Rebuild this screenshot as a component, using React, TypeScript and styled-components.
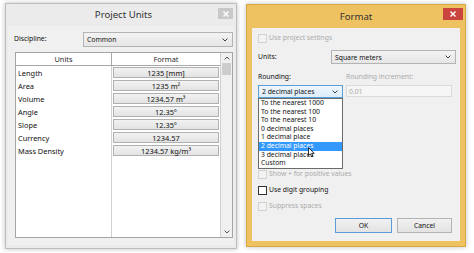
import React from 'react';
import styled, { createGlobalStyle } from 'styled-components';

const GlobalStyle = createGlobalStyle`
  html, body { margin: 0; padding: 0; background: #ffffff; }
  body { font-family: "Noto Sans", "Segoe UI", sans-serif; color: #111; }
  * { box-sizing: border-box; }
`;

const Desktop = styled.div`
  width: 474px;
  height: 253px;
  overflow: hidden;
  display: flex;
  align-items: flex-start;
  gap: 9px;
  padding: 3px 0 0 5px;
`;

const Window = styled.div<{ $active?: boolean; $width: number; $height: number }>`
  width: ${(p) => p.$width}px;
  height: ${(p) => p.$height}px;
  margin-top: ${(p) => (p.$active ? 1 : 0)}px;
  flex: none;
  display: flex;
  flex-direction: column;
  background: ${(p) => (p.$active ? '#efc261' : '#ebebeb')};
  border: 1px solid ${(p) => (p.$active ? '#d9a844' : '#bdbdbd')};
  box-shadow: 0 0 5px rgba(0, 0, 0, 0.25);
`;

const TitleBar = styled.div<{ $height: number }>`
  height: ${(p) => p.$height}px;
  flex: none;
  display: grid;
  grid-template-columns: 1fr auto 1fr;
  align-items: start;
`;

const Title = styled.div<{ $shift?: number }>`
  grid-column: 2;
  align-self: center;
  padding-left: ${(p) => p.$shift ?? 0}px;
  font-size: 9.6px;
  line-height: 1;
  color: #333;
  white-space: nowrap;
`;

const CloseButton = styled.div<{ $active?: boolean }>`
  grid-column: 3;
  justify-self: end;
  width: ${(p) => (p.$active ? 20 : 15)}px;
  height: ${(p) => (p.$active ? 12 : 11)}px;
  margin: ${(p) => (p.$active ? '3px 2px 0 0' : '4px 3px 0 0')};
  background: ${(p) => (p.$active ? '#c9453d' : '#c9c9c9')};
  display: flex;
  align-items: center;
  justify-content: center;
`;

const Client = styled.div<{ $active?: boolean }>`
  flex: 1;
  display: flex;
  flex-direction: column;
  background: #f0f0f0;
  margin: ${(p) => (p.$active ? '0 5px 5px' : '0 2px 3px')};
  padding: ${(p) => (p.$active ? '5px 4px 0 6px' : '6px 1px 0 6px')};
`;

const Label = styled.span<{ $disabled?: boolean }>`
  font-size: 6.8px;
  line-height: 1;
  color: ${(p) => (p.$disabled ? '#ababab' : '#111')};
  white-space: nowrap;
`;

const FieldRow = styled.div<{ $labelWidth: number; $height: number; $mt?: number }>`
  display: grid;
  grid-template-columns: ${(p) => p.$labelWidth}px auto;
  align-items: center;
  height: ${(p) => p.$height}px;
  margin-top: ${(p) => p.$mt ?? 0}px;
  flex: none;
`;

const ComboBox = styled.div<{ $focused?: boolean; $width: number; $height: number }>`
  width: ${(p) => p.$width}px;
  height: ${(p) => p.$height}px;
  display: flex;
  align-items: center;
  justify-content: space-between;
  padding: 0 4px 0 3px;
  border: 1px solid ${(p) => (p.$focused ? '#5b9fd8' : '#b3b3b3')};
  background: ${(p) =>
    p.$focused
      ? 'linear-gradient(#eef6fd, #dcedfb)'
      : 'linear-gradient(#f3f3f3, #e6e6e6)'};
  font-size: 6.8px;
  color: #111;
  white-space: nowrap;
`;

const Chevron = () => (
  <svg width="6" height="4" viewBox="0 0 6 4">
    <path d="M0.6 0.6 L3 3 L5.4 0.6" fill="none" stroke="#404040" strokeWidth="1" />
  </svg>
);

const CrossIcon = () => (
  <svg width="6" height="6" viewBox="0 0 6 6">
    <path d="M0.5 0.5 L5.5 5.5 M5.5 0.5 L0.5 5.5" stroke="#ffffff" strokeWidth="1.4" />
  </svg>
);

/* ---------- list view (left window) ---------- */

const ListView = styled.div`
  flex: none;
  height: 186px;
  margin-top: 5px;
  margin-left: 1px;
  display: flex;
  border: 1px solid #a5a5a5;
  background: #ffffff;
`;

const Grid = styled.div`
  flex: 1;
  display: grid;
  grid-template-columns: 96px 108px;
  grid-template-rows: repeat(8, 13px) 1fr;
  border-right: 1px solid #d0d0d0;
`;

const HeaderCell = styled.div<{ $first?: boolean }>`
  display: flex;
  align-items: center;
  justify-content: center;
  font-size: 7.4px;
  color: #2a2a2a;
  border-bottom: 1px solid #a8a8a8;
  border-right: ${(p) => (p.$first ? '1px solid #a8a8a8' : 'none')};
`;

const NameCell = styled.div`
  display: flex;
  align-items: center;
  padding-left: 2px;
  font-size: 7.4px;
  color: #111;
  border-right: 1px solid #cfcfcf;
  white-space: nowrap;
`;

const ValueCell = styled.div`
  display: flex;
  padding: 1px;
`;

const FormatButton = styled.div`
  flex: 1;
  display: flex;
  align-items: center;
  justify-content: center;
  border: 1px solid #b1b1b1;
  background: linear-gradient(#f2f2f2, #e3e3e3);
  font-size: 7.4px;
  color: #111;
  white-space: nowrap;
`;

const FillerCell = styled.div<{ $first?: boolean }>`
  border-right: ${(p) => (p.$first ? '1px solid #cfcfcf' : 'none')};
`;

const ScrollBar = styled.div`
  width: 11px;
  flex: none;
  display: flex;
  flex-direction: column;
  background: #f0f0f0;
`;

const ScrollArrow = styled.div`
  height: 10px;
  flex: none;
  display: flex;
  align-items: center;
  justify-content: center;
`;

const ScrollThumb = styled.div`
  height: 12px;
  margin: 0 1px;
  flex: none;
  background: #cdcdcd;
`;

const ScrollTrack = styled.div`
  flex: 1;
`;

const ArrowIcon = ({ up }: { up?: boolean }) => (
  <svg width="6" height="4" viewBox="0 0 6 4">
    <path
      d={up ? 'M0.6 3.4 L3 1 L5.4 3.4' : 'M0.6 0.6 L3 3 L5.4 0.6'}
      fill="none"
      stroke="#505050"
      strokeWidth="1"
    />
  </svg>
);

/* ---------- right window ---------- */

const CheckRow = styled.div<{ $mt?: number }>`
  display: flex;
  align-items: center;
  gap: 2px;
  height: 10px;
  flex: none;
  margin-top: ${(p) => p.$mt ?? 0}px;
`;

const CheckBox = styled.span<{ $disabled?: boolean }>`
  width: 9px;
  height: 9px;
  flex: none;
  border: 1px solid ${(p) => (p.$disabled ? '#d2d2d2' : '#333333')};
  background: ${(p) => (p.$disabled ? '#f2f2f2' : '#ffffff')};
`;

const ControlsRow = styled.div`
  display: flex;
  align-items: flex-start;
  gap: 3px;
  height: 13px;
  margin-top: 3px;
  flex: none;
`;

const ComboWrap = styled.div`
  position: relative;
`;

const TextField = styled.div`
  width: 106px;
  height: 12px;
  display: flex;
  align-items: center;
  padding-left: 2px;
  border: 1px solid #dadada;
  background: #f6f6f6;
  font-size: 6.8px;
  color: #a9a9a9;
`;

const DropList = styled.div`
  position: absolute;
  top: 100%;
  left: 0;
  width: 85px;
  border: 1px solid #6b6b6b;
  background: #ffffff;
  z-index: 2;
`;

const DropItem = styled.div<{ $selected?: boolean }>`
  height: 8.6px;
  line-height: 8.6px;
  padding-left: 2px;
  font-size: 6.8px;
  white-space: nowrap;
  color: ${(p) => (p.$selected ? '#ffffff' : '#111')};
  background: ${(p) => (p.$selected ? '#3399ff' : 'transparent')};
`;

const Pointer = styled.svg`
  position: absolute;
  left: 49px;
  top: 48px;
`;

const ButtonRow = styled.div`
  display: flex;
  justify-content: flex-end;
  gap: 5px;
  margin-top: 7px;
  padding-right: 4px;
  flex: none;
`;

const DialogButton = styled.div<{ $default?: boolean; $width: number }>`
  width: ${(p) => p.$width}px;
  height: 15px;
  display: flex;
  align-items: center;
  justify-content: center;
  border: 1px solid ${(p) => (p.$default ? '#5d9bd6' : '#b3b3b3')};
  background: linear-gradient(#f1f1f1, #e3e3e3);
  font-size: 6.8px;
  color: #111;
`;

const rows: { name: string; value: string }[] = [
  { name: 'Length', value: '1235 [mm]' },
  { name: 'Area', value: '1235 m²' },
  { name: 'Volume', value: '1234.57 m³' },
  { name: 'Angle', value: '12.35°' },
  { name: 'Slope', value: '12.35°' },
  { name: 'Currency', value: '1234.57' },
  { name: 'Mass Density', value: '1234.57 kg/m³' },
];

const roundingOptions = [
  'To the nearest 1000',
  'To the nearest 100',
  'To the nearest 10',
  '0 decimal places',
  '1 decimal place',
  '2 decimal places',
  '3 decimal places',
  'Custom',
];

export default function App() {
  return (
    <>
      <GlobalStyle />
      <Desktop>
        <Window $width={232} $height={246}>
          <TitleBar $height={22}>
            <Title $shift={5}>Project Units</Title>
            <CloseButton>
              <CrossIcon />
            </CloseButton>
          </TitleBar>
          <Client>
            <FieldRow $labelWidth={69} $height={15}>
              <Label>Discipline:</Label>
              <ComboBox $width={150} $height={15}>
                <span>Common</span>
                <Chevron />
              </ComboBox>
            </FieldRow>
            <ListView>
              <Grid>
                <HeaderCell $first>Units</HeaderCell>
                <HeaderCell>Format</HeaderCell>
                {rows.map((r) => (
                  <React.Fragment key={r.name}>
                    <NameCell>{r.name}</NameCell>
                    <ValueCell>
                      <FormatButton>{r.value}</FormatButton>
                    </ValueCell>
                  </React.Fragment>
                ))}
                <FillerCell $first />
                <FillerCell />
              </Grid>
              <ScrollBar>
                <ScrollArrow>
                  <ArrowIcon up />
                </ScrollArrow>
                <ScrollThumb />
                <ScrollTrack />
                <ScrollArrow>
                  <ArrowIcon />
                </ScrollArrow>
              </ScrollBar>
            </ListView>
          </Client>
        </Window>

        <Window $active $width={220} $height={243}>
          <TitleBar $height={23}>
            <Title>Format</Title>
            <CloseButton $active>
              <CrossIcon />
            </CloseButton>
          </TitleBar>
          <Client $active>
            <CheckRow>
              <CheckBox $disabled />
              <Label $disabled>Use project settings</Label>
            </CheckRow>
            <FieldRow $labelWidth={73} $height={14} $mt={7}>
              <Label>Units:</Label>
              <ComboBox $width={125} $height={14}>
                <span>Square meters</span>
                <Chevron />
              </ComboBox>
            </FieldRow>
            <FieldRow $labelWidth={88} $height={10} $mt={8}>
              <Label>Rounding:</Label>
              <Label $disabled>Rounding increment:</Label>
            </FieldRow>
            <ControlsRow>
              <ComboWrap>
                <ComboBox $focused $width={85} $height={13}>
                  <span>2 decimal places</span>
                  <Chevron />
                </ComboBox>
                <DropList>
                  {roundingOptions.map((o) => (
                    <DropItem key={o} $selected={o === '2 decimal places'}>
                      {o}
                    </DropItem>
                  ))}
                  <Pointer width="7" height="11" viewBox="0 0 7 11">
                    <path
                      d="M0.5 0.5 L0.5 8.6 L2.4 6.9 L3.7 9.9 L5 9.3 L3.7 6.4 L6.2 6.4 Z"
                      fill="#ffffff"
                      stroke="#000000"
                      strokeWidth="0.8"
                      strokeLinejoin="round"
                    />
                  </Pointer>
                </DropList>
              </ComboWrap>
              <TextField>0.01</TextField>
            </ControlsRow>
            <CheckRow $mt={71}>
              <CheckBox $disabled />
              <Label $disabled>Show + for positive values</Label>
            </CheckRow>
            <CheckRow $mt={6}>
              <CheckBox />
              <Label>Use digit grouping</Label>
            </CheckRow>
            <CheckRow $mt={6}>
              <CheckBox $disabled />
              <Label $disabled>Suppress spaces</Label>
            </CheckRow>
            <ButtonRow>
              <DialogButton $default $width={57}>
                OK
              </DialogButton>
              <DialogButton $width={55}>Cancel</DialogButton>
            </ButtonRow>
          </Client>
        </Window>
      </Desktop>
    </>
  );
}
